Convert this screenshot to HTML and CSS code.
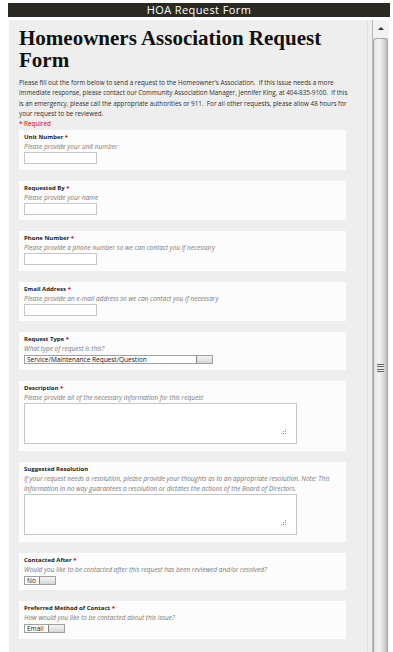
FILE: index.html
```html
<!DOCTYPE html>
<html lang="en">
  <head>
    <meta charset="UTF-8" />
    <title>HOA Request Form</title>
    <link rel="stylesheet" href="styles.css">
  </head>

  <body>
    <div class="titlebar">HOA Request Form</div>
    <div class="frame">
      <div class="content">
        <h1>Homeowners Association Request Form</h1>
        <p class="intro">
          Please fill out the form below to send a request to the Homeowner's Association.&nbsp; If this issue needs a more
          immediate response, please contact our Community Association Manager, Jennifer King, at 404-835-9100.&nbsp; If this
          is an emergency, please call the appropriate authorities or 911.&nbsp; For all other requests, please allow 48 hours for
          your request to be reviewed.
        </p>
        <p class="required-note">* Required</p>

        <div class="field">
          <label>Unit Number <span class="req">*</span></label>
          <div class="help">Please provide your unit number</div>
          <input class="text" type="text">
        </div>

        <div class="field">
          <label>Requested By <span class="req">*</span></label>
          <div class="help">Please provide your name</div>
          <input class="text" type="text">
        </div>

        <div class="field">
          <label>Phone Number <span class="req">*</span></label>
          <div class="help">Please provide a phone number so we can contact you if necessary</div>
          <input class="text" type="text">
        </div>

        <div class="field">
          <label>Email Address <span class="req">*</span></label>
          <div class="help">Please provide an e-mail address so we can contact you if necessary</div>
          <input class="text" type="text">
        </div>

        <div class="field">
          <label>Request Type <span class="req">*</span></label>
          <div class="help">What type of request is this?</div>
          <div class="select select-wide">
            <span class="select-value">Service/Maintenance Request/Question</span>
            <span class="select-btn"></span>
          </div>
        </div>

        <div class="field">
          <label>Description <span class="req">*</span></label>
          <div class="help">Please provide all of the necessary information for this request</div>
          <div class="area-wrap">
            <textarea class="area"></textarea>
            <span class="grip">
              <svg width="5" height="5" viewBox="0 0 5 5">
                <rect x="4" y="0" width="1" height="1" fill="#9a9a9a"/>
                <rect x="2" y="2" width="1" height="1" fill="#9a9a9a"/>
                <rect x="4" y="2" width="1" height="1" fill="#9a9a9a"/>
                <rect x="0" y="4" width="1" height="1" fill="#9a9a9a"/>
                <rect x="2" y="4" width="1" height="1" fill="#9a9a9a"/>
                <rect x="4" y="4" width="1" height="1" fill="#9a9a9a"/>
              </svg>
            </span>
          </div>
        </div>

        <div class="field">
          <label>Suggested Resolution</label>
          <div class="help">If your request needs a resolution, please provide your thoughts as to an appropriate resolution. Note: This information in no way guarantees a resolution or dictates the actions of the Board of Directors.</div>
          <div class="area-wrap">
            <textarea class="area"></textarea>
            <span class="grip">
              <svg width="5" height="5" viewBox="0 0 5 5">
                <rect x="4" y="0" width="1" height="1" fill="#9a9a9a"/>
                <rect x="2" y="2" width="1" height="1" fill="#9a9a9a"/>
                <rect x="4" y="2" width="1" height="1" fill="#9a9a9a"/>
                <rect x="0" y="4" width="1" height="1" fill="#9a9a9a"/>
                <rect x="2" y="4" width="1" height="1" fill="#9a9a9a"/>
                <rect x="4" y="4" width="1" height="1" fill="#9a9a9a"/>
              </svg>
            </span>
          </div>
        </div>

        <div class="field">
          <label>Contacted After <span class="req">*</span></label>
          <div class="help">Would you like to be contacted after this request has been reviewed and/or resolved?</div>
          <div class="select select-no">
            <span class="select-value">No</span>
            <span class="select-btn"></span>
          </div>
        </div>

        <div class="field">
          <label>Preferred Method of Contact <span class="req">*</span></label>
          <div class="help">How would you like to be contacted about this issue?</div>
          <div class="select select-email">
            <span class="select-value">Email</span>
            <span class="select-btn"></span>
          </div>
        </div>
      </div>

      <div class="scrollbar">
        <div class="track">
          <div class="scroll-up"></div>
          <div class="thumb">
            <div class="thumb-grip"></div>
          </div>
        </div>
      </div>
    </div>
  </body>
</html>
```

FILE: styles.css
```css
body {
  margin: 3px 3px 0 8px;
  background-color: #fff;
  font-family: "Open Sans", "Noto Sans", sans-serif;
  overflow: hidden;
}

.titlebar {
  height: 14px;
  background-color: #2b2a22;
  color: #fff;
  font-size: 11px;
  line-height: 14px;
  letter-spacing: 0.4px;
  text-align: center;
}

.frame {
  display: flex;
  height: 632px;
  margin: 3px 1px 0 1px;
  background-color: #eeeeee;
  overflow: hidden;
}

.content {
  width: 348px;
  padding: 7px 0 0 10px;
}

h1 {
  margin: 0;
  font-family: "Liberation Serif", serif;
  font-size: 21px;
  line-height: 22px;
  font-weight: bold;
  color: #111;
}

.intro {
  width: 333px;
  margin: 7px 0 0;
  font-size: 6.3px;
  line-height: 10.3px;
  color: #2e2e2e;
}

.required-note {
  margin: 0 0 1px;
  font-size: 6.3px;
  line-height: 10px;
  color: #d00000;
}

.field {
  width: 317px;
  padding: 2px 5px 5.5px;
  margin-bottom: 11px;
  background-color: #fcfcfc;
}

.field label {
  display: block;
  font-size: 6px;
  line-height: 10px;
  font-weight: bold;
  color: #222;
}

.req {
  color: #d00000;
}

.help {
  font-size: 6.5px;
  line-height: 10px;
  font-style: italic;
  color: #7a7a7a;
}

.text {
  display: block;
  box-sizing: border-box;
  width: 73px;
  height: 12px;
  margin: 0;
  padding: 0;
  border: 1px solid #c6c6c6;
  background-color: #fff;
}

.select {
  display: flex;
  box-sizing: border-box;
  height: 9px;
  margin: 1px 0 0;
  border: 1px solid #a0a0a0;
  background-color: #fff;
}

.select-wide {
  width: 189px;
}

.select-no {
  width: 32px;
}

.select-email {
  width: 41px;
}

.select-value {
  flex: 1;
  padding-left: 2px;
  font-size: 6.5px;
  line-height: 7px;
  color: #111;
  white-space: nowrap;
}

.select-btn {
  width: 15px;
  border-left: 1px solid #808080;
  background: linear-gradient(#f4f4f4, #d6d6d6);
}

.area-wrap {
  position: relative;
  width: 273px;
  margin-bottom: 1.5px;
}

.area {
  display: block;
  box-sizing: border-box;
  width: 273px;
  height: 41px;
  margin: 0;
  border: 1px solid #c6c6c6;
  background-color: #fff;
  resize: none;
}

.grip {
  position: absolute;
  right: 11px;
  bottom: 10px;
  width: 5px;
  height: 5px;
}

.grip svg {
  display: block;
}

.scrollbar {
  width: 21px;
  border-left: 1px solid #e0e0e0;
  display: flex;
}

.track {
  flex: 1;
  display: flex;
  flex-direction: column;
  margin-left: 4px;
  border-left: 1px solid #b8b8b8;
  background-color: #f2f2f2;
}

.scroll-up {
  position: relative;
  height: 18px;
}

.scroll-up::after {
  content: "";
  position: absolute;
  left: 5px;
  top: 7px;
  border-left: 3px solid transparent;
  border-right: 3px solid transparent;
  border-bottom: 3px solid #333;
}

.thumb {
  flex: 1;
  width: 13px;
  border: 1px solid #a8a8a8;
  border-bottom: none;
  border-radius: 3px 3px 0 0;
  background: linear-gradient(to right, #e4e4e4, #f4f4f4 40%, #d8d8d8 75%, #bcbcbc);
}

.thumb-grip {
  width: 7px;
  height: 9px;
  margin: 325px 0 0 3px;
  background: repeating-linear-gradient(#6a6a6a 0, #6a6a6a 1px, #e8e8e8 1px, #e8e8e8 2.5px);
}
```
